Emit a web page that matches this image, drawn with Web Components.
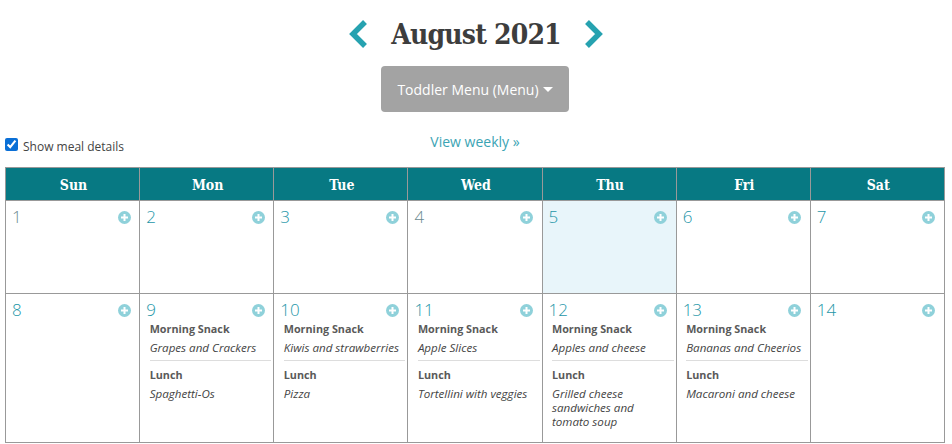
<!DOCTYPE html>
<html>
<head>
<meta charset="utf-8">
<title>August 2021</title>
<style>
  html, body { margin: 0; padding: 0; background: #fff; overflow: hidden; }
  body { font-family: "Open Sans", sans-serif; color: #444; }
</style>
</head>
<body>
<meal-page>
  <month-nav slot="nav" month="August 2021"></month-nav>
  <menu-button slot="menu">Toddler Menu (Menu)</menu-button>
  <view-options slot="options"></view-options>
  <meal-calendar slot="calendar">
    <cal-head>Sun</cal-head><cal-head>Mon</cal-head><cal-head>Tue</cal-head><cal-head>Wed</cal-head>
    <cal-head>Thu</cal-head><cal-head>Fri</cal-head><cal-head>Sat</cal-head>

    <cal-day day="1" muted></cal-day>
    <cal-day day="2"></cal-day>
    <cal-day day="3"></cal-day>
    <cal-day day="4" muted></cal-day>
    <cal-day day="5" today></cal-day>
    <cal-day day="6"></cal-day>
    <cal-day day="7"></cal-day>

    <cal-day day="8"></cal-day>
    <cal-day day="9">
      <cal-meal name="Morning Snack">Grapes and Crackers</cal-meal>
      <cal-meal name="Lunch">Spaghetti-Os</cal-meal>
    </cal-day>
    <cal-day day="10">
      <cal-meal name="Morning Snack">Kiwis and strawberries</cal-meal>
      <cal-meal name="Lunch">Pizza</cal-meal>
    </cal-day>
    <cal-day day="11">
      <cal-meal name="Morning Snack">Apple Slices</cal-meal>
      <cal-meal name="Lunch">Tortellini with veggies</cal-meal>
    </cal-day>
    <cal-day day="12">
      <cal-meal name="Morning Snack">Apples and cheese</cal-meal>
      <cal-meal name="Lunch">Grilled cheese sandwiches and tomato soup</cal-meal>
    </cal-day>
    <cal-day day="13">
      <cal-meal name="Morning Snack">Bananas and Cheerios</cal-meal>
      <cal-meal name="Lunch">Macaroni and cheese</cal-meal>
    </cal-day>
    <cal-day day="14"></cal-day>
  </meal-calendar>
</meal-page>

<script>
class MealPage extends HTMLElement {
  constructor() {
    super();
    const shadowRoot = this.attachShadow({mode: 'open'});
    shadowRoot.innerHTML = `
      <style>
        :host{
          display: flex;
          flex-direction: column;
          width: 952px;
          height: 444px;
          overflow: hidden;
          box-sizing: border-box;
          padding: 14px 7px 0 5px;
        }
      </style>
      <slot name="nav"></slot>
      <slot name="menu"></slot>
      <slot name="options"></slot>
      <slot name="calendar"></slot>
    `;
  }
}
customElements.define('meal-page', MealPage);

class MonthNav extends HTMLElement {
  constructor() {
    super();
    const shadowRoot = this.attachShadow({mode: 'open'});
    shadowRoot.innerHTML = `
      <style>
        :host{
          display: flex;
          justify-content: center;
          align-items: center;
          gap: 23px;
          height: 42px;
          margin-bottom: 10px;
          padding-left: 2px;
        }
        h1{
          margin: 0;
          font: bold 28px/42px "DejaVu Serif Condensed", "DejaVu Serif", serif;
          letter-spacing: -0.8px;
          color: #3d3d3d;
        }
        svg{ display: block; margin-top: -2px; }
      </style>
      <svg width="20" height="30" viewBox="0 0 20 30"><path d="M17 3 L5 15 L17 27" fill="none" stroke="#26a2b0" stroke-width="5.5"/></svg>
      <h1>${ this.getAttribute('month') }</h1>
      <svg width="20" height="30" viewBox="0 0 20 30"><path d="M3 3 L15 15 L3 27" fill="none" stroke="#26a2b0" stroke-width="5.5"/></svg>
    `;
  }
}
customElements.define('month-nav', MonthNav);

class MenuButton extends HTMLElement {
  constructor() {
    super();
    const shadowRoot = this.attachShadow({mode: 'open'});
    shadowRoot.innerHTML = `
      <style>
        :host{
          display: flex;
          justify-content: center;
        }
        button{
          display: flex;
          align-items: center;
          justify-content: center;
          gap: 4px;
          width: 188px;
          height: 46px;
          padding: 0;
          border: 0;
          border-radius: 4px;
          background: #a3a3a3;
          color: #fff;
          font: 14px "Open Sans", sans-serif;
        }
        i{
          width: 0;
          height: 0;
          border-left: 5px solid transparent;
          border-right: 5px solid transparent;
          border-top: 5px solid #fff;
        }
      </style>
      <button><slot></slot><i></i></button>
    `;
  }
}
customElements.define('menu-button', MenuButton);

class ViewOptions extends HTMLElement {
  constructor() {
    super();
    const shadowRoot = this.attachShadow({mode: 'open'});
    shadowRoot.innerHTML = `
      <style>
        :host{
          display: grid;
          grid-template-columns: 1fr auto 1fr;
          height: 55px;
          align-items: start;
        }
        label{
          display: flex;
          align-items: flex-start;
          gap: 5px;
          margin-top: 26px;
          font-size: 12px;
          line-height: 18px;
          color: #444;
        }
        input{
          width: 13px;
          height: 13px;
          margin: 0;
          accent-color: #0a6fd6;
        }
        a{
          margin-top: 20px;
          font-size: 14px;
          line-height: 20px;
          color: #3ba4b4;
          text-decoration: none;
        }
      </style>
      <label><input type="checkbox" checked>Show meal details</label>
      <a href="#">View weekly »</a>
      <span></span>
    `;
  }
}
customElements.define('view-options', ViewOptions);

class MealCalendar extends HTMLElement {
  constructor() {
    super();
    const shadowRoot = this.attachShadow({mode: 'open'});
    shadowRoot.innerHTML = `
      <style>
        :host{
          display: grid;
          grid-template-columns: repeat(7, 134.14px);
          grid-template-rows: 33px 93px 149px;
          width: 939px;
          border-top: 1px solid #999;
          border-left: 1px solid #999;
          box-sizing: content-box;
        }
      </style>
      <slot></slot>
    `;
  }
}
customElements.define('meal-calendar', MealCalendar);

class CalHead extends HTMLElement {
  constructor() {
    super();
    const shadowRoot = this.attachShadow({mode: 'open'});
    shadowRoot.innerHTML = `
      <style>
        :host{
          display: flex;
          align-items: center;
          justify-content: center;
          box-sizing: border-box;
          padding: 1px 0 0 2px;
          background: #077983;
          color: #fff;
          border-right: 1px solid #999;
          border-bottom: 1px solid #999;
          font: bold 14px "DejaVu Serif Condensed", "DejaVu Serif", serif;
        }
      </style>
      <slot></slot>
    `;
  }
}
customElements.define('cal-head', CalHead);

class CalDay extends HTMLElement {
  constructor() {
    super();
    const shadowRoot = this.attachShadow({mode: 'open'});
    shadowRoot.innerHTML = `
      <style>
        :host{
          display: block;
          box-sizing: border-box;
          border-right: 1px solid #999;
          border-bottom: 1px solid #999;
          padding: 4px 0 0 0;
          background: #fff;
        }
        :host([today]){ background: #e8f5fa; }
        .top{
          display: flex;
          justify-content: space-between;
          align-items: center;
          height: 24px;
          padding: 0 8.5px 0 6px;
        }
        .num{
          font-size: 17px;
          font-weight: 300;
          line-height: 24px;
          color: #2496a8;
        }
        :host([muted]) .num{ color: #6b8a91; }
        svg{ display: block; }
        .meals{ padding: 0 2px 0 9.5px; }
      </style>
      <div class="top">
        <span class="num">${ this.getAttribute('day') }</span>
        <svg width="13" height="13" viewBox="0 0 13 13">
          <circle cx="6.5" cy="6.5" r="6.5" fill="#8fd1da"/>
          <path d="M6.5 3 V10 M3 6.5 H10" stroke="#fff" stroke-width="2"/>
        </svg>
      </div>
      <div class="meals"><slot></slot></div>
    `;
  }
}
customElements.define('cal-day', CalDay);

class CalMeal extends HTMLElement {
  constructor() {
    super();
    const shadowRoot = this.attachShadow({mode: 'open'});
    shadowRoot.innerHTML = `
      <style>
        :host{
          display: block;
          font-size: 11.6px;
          line-height: 14px;
          color: #444;
          padding-bottom: 5px;
          margin-bottom: 7px;
          border-bottom: 1px solid #ddd;
        }
        :host(:last-child){ border-bottom: 0; margin-bottom: 0; }
        .name{ font-size: 10.8px; font-weight: bold; color: #5a5a5a; margin-bottom: 5px; }
        .food{ font-style: italic; padding-right: 2px; }
      </style>
      <div class="name">${ this.getAttribute('name') }</div>
      <div class="food"><slot></slot></div>
    `;
  }
}
customElements.define('cal-meal', CalMeal);
</script>
</body>
</html>
